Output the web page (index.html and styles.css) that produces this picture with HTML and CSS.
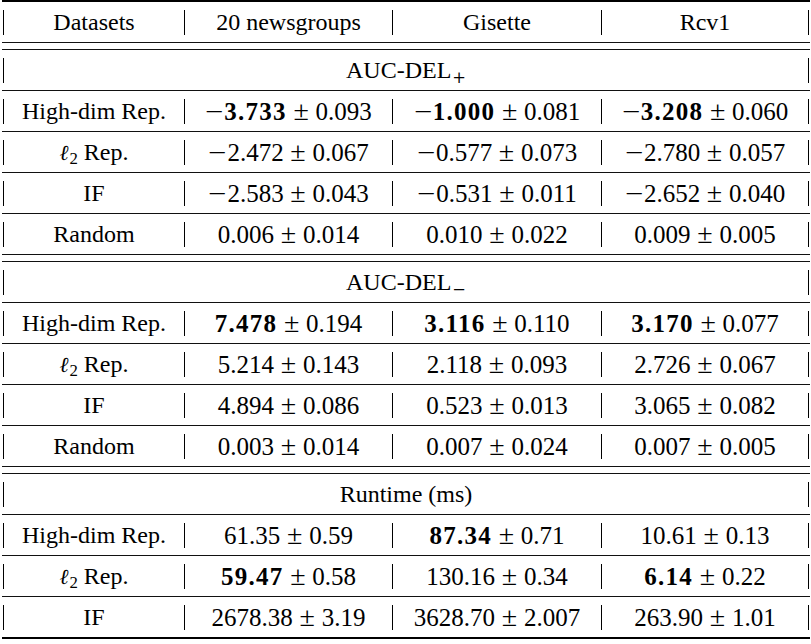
FILE: index.html
```html
<!DOCTYPE html>
<html>
<head>
<meta charset="utf-8">
<title>Results table</title>
<link rel="stylesheet" href="styles.css">
</head>
<body>
<div class="tbl">
  <div class="rule heavy"></div>
  <div class="row">
    <span class="bar"></span><div class="cell">Datasets</div>
    <span class="bar"></span><div class="cell">20 newsgroups</div>
    <span class="bar"></span><div class="cell">Gisette</div>
    <span class="bar"></span><div class="cell">Rcv1</div>
    <span class="bar"></span>
  </div>
  <div class="rule"></div><div class="dgap"></div><div class="rule"></div>

  <div class="row title"><span class="bar"></span><div class="cell">AUC-DEL<sub class="op">+</sub></div><span class="bar"></span></div>
  <div class="rule"></div>
  <div class="row">
    <span class="bar"></span><div class="cell">High-dim Rep.</div>
    <span class="bar"></span><div class="cell m"><span class="neg">−</span><b>3.733</b><span class="pm">±</span>0.093</div>
    <span class="bar"></span><div class="cell m"><span class="neg">−</span><b>1.000</b><span class="pm">±</span>0.081</div>
    <span class="bar"></span><div class="cell m"><span class="neg">−</span><b>3.208</b><span class="pm">±</span>0.060</div>
    <span class="bar"></span>
  </div>
  <div class="rule"></div>
  <div class="row">
    <span class="bar"></span><div class="cell"><span class="ell">ℓ</span><sub class="two">2</sub>&nbsp;Rep.</div>
    <span class="bar"></span><div class="cell m"><span class="neg">−</span>2.472<span class="pm">±</span>0.067</div>
    <span class="bar"></span><div class="cell m"><span class="neg">−</span>0.577<span class="pm">±</span>0.073</div>
    <span class="bar"></span><div class="cell m"><span class="neg">−</span>2.780<span class="pm">±</span>0.057</div>
    <span class="bar"></span>
  </div>
  <div class="rule"></div>
  <div class="row">
    <span class="bar"></span><div class="cell">IF</div>
    <span class="bar"></span><div class="cell m"><span class="neg">−</span>2.583<span class="pm">±</span>0.043</div>
    <span class="bar"></span><div class="cell m"><span class="neg">−</span>0.531<span class="pm">±</span>0.011</div>
    <span class="bar"></span><div class="cell m"><span class="neg">−</span>2.652<span class="pm">±</span>0.040</div>
    <span class="bar"></span>
  </div>
  <div class="rule"></div>
  <div class="row">
    <span class="bar"></span><div class="cell">Random</div>
    <span class="bar"></span><div class="cell m">0.006<span class="pm">±</span>0.014</div>
    <span class="bar"></span><div class="cell m">0.010<span class="pm">±</span>0.022</div>
    <span class="bar"></span><div class="cell m">0.009<span class="pm">±</span>0.005</div>
    <span class="bar"></span>
  </div>
  <div class="rule"></div><div class="dgap"></div><div class="rule"></div>

  <div class="row title"><span class="bar"></span><div class="cell">AUC-DEL<sub class="op">−</sub></div><span class="bar"></span></div>
  <div class="rule"></div>
  <div class="row">
    <span class="bar"></span><div class="cell">High-dim Rep.</div>
    <span class="bar"></span><div class="cell m"><b>7.478</b><span class="pm">±</span>0.194</div>
    <span class="bar"></span><div class="cell m"><b>3.116</b><span class="pm">±</span>0.110</div>
    <span class="bar"></span><div class="cell m"><b>3.170</b><span class="pm">±</span>0.077</div>
    <span class="bar"></span>
  </div>
  <div class="rule"></div>
  <div class="row">
    <span class="bar"></span><div class="cell"><span class="ell">ℓ</span><sub class="two">2</sub>&nbsp;Rep.</div>
    <span class="bar"></span><div class="cell m">5.214<span class="pm">±</span>0.143</div>
    <span class="bar"></span><div class="cell m">2.118<span class="pm">±</span>0.093</div>
    <span class="bar"></span><div class="cell m">2.726<span class="pm">±</span>0.067</div>
    <span class="bar"></span>
  </div>
  <div class="rule"></div>
  <div class="row">
    <span class="bar"></span><div class="cell">IF</div>
    <span class="bar"></span><div class="cell m">4.894<span class="pm">±</span>0.086</div>
    <span class="bar"></span><div class="cell m">0.523<span class="pm">±</span>0.013</div>
    <span class="bar"></span><div class="cell m">3.065<span class="pm">±</span>0.082</div>
    <span class="bar"></span>
  </div>
  <div class="rule"></div>
  <div class="row">
    <span class="bar"></span><div class="cell">Random</div>
    <span class="bar"></span><div class="cell m">0.003<span class="pm">±</span>0.014</div>
    <span class="bar"></span><div class="cell m">0.007<span class="pm">±</span>0.024</div>
    <span class="bar"></span><div class="cell m">0.007<span class="pm">±</span>0.005</div>
    <span class="bar"></span>
  </div>
  <div class="rule"></div><div class="dgap"></div><div class="rule"></div>

  <div class="row title"><span class="bar"></span><div class="cell">Runtime (ms)</div><span class="bar"></span></div>
  <div class="rule"></div>
  <div class="row">
    <span class="bar"></span><div class="cell">High-dim Rep.</div>
    <span class="bar"></span><div class="cell m">61.35<span class="pm">±</span>0.59</div>
    <span class="bar"></span><div class="cell m"><b>87.34</b><span class="pm">±</span>0.71</div>
    <span class="bar"></span><div class="cell m">10.61<span class="pm">±</span>0.13</div>
    <span class="bar"></span>
  </div>
  <div class="rule"></div>
  <div class="row">
    <span class="bar"></span><div class="cell"><span class="ell">ℓ</span><sub class="two">2</sub>&nbsp;Rep.</div>
    <span class="bar"></span><div class="cell m"><b>59.47</b><span class="pm">±</span>0.58</div>
    <span class="bar"></span><div class="cell m">130.16<span class="pm">±</span>0.34</div>
    <span class="bar"></span><div class="cell m"><b>6.14</b><span class="pm">±</span>0.22</div>
    <span class="bar"></span>
  </div>
  <div class="rule"></div>
  <div class="row">
    <span class="bar"></span><div class="cell">IF</div>
    <span class="bar"></span><div class="cell m">2678.38<span class="pm">±</span>3.19</div>
    <span class="bar"></span><div class="cell m">3628.70<span class="pm">±</span>2.007</div>
    <span class="bar"></span><div class="cell m">263.90<span class="pm">±</span>1.01</div>
    <span class="bar"></span>
  </div>
  <div class="rule heavy"></div>
</div>
</body>
</html>
```

FILE: styles.css
```css
html, body {
  margin: 0;
  padding: 0;
  background: #fff;
}

body {
  font-family: "Liberation Serif", "Times New Roman", serif;
  font-size: 24px;
  color: #000;
}

.tbl {
  margin-left: 2px;
  width: 808px;
  display: flex;
  flex-direction: column;
}

.rule {
  height: 1px;
  background: #111;
}

.rule.heavy {
  height: 2px;
  background: #000;
}

.dgap {
  height: 6px;
}

.row {
  height: 40px;
  padding: 0 1px;
  display: grid;
  grid-template-columns: 1px 180px 1px 207px 1px 208px 1px 206px 1px;
  align-items: center;
}

.row.title {
  grid-template-columns: 1px 1fr 1px;
}

.bar {
  width: 1px;
  height: 25px;
  background: #000;
}

.cell {
  display: block;
  text-align: center;
  line-height: 1;
  white-space: nowrap;
}

.cell sub {
  font-size: 0.7em;
  line-height: 0;
  vertical-align: -0.22em;
}

.cell sub.op {
  font-family: "DejaVu Serif", serif;
  font-weight: 300;
  font-size: 0.68em;
  vertical-align: -0.32em;
  margin-left: 1px;
}

.cell sub.two {
  vertical-align: -0.26em;
  margin-left: 1px;
}

.ell {
  font-family: "DejaVu Serif", serif;
  font-style: italic;
  font-size: 0.9em;
}

.m {
  font-size: 25px;
}

.m b {
  font-weight: 700;
  letter-spacing: 0.05em;
}

.neg {
  display: inline-block;
  transform: scaleX(1.3);
  margin: 0 0.12em 0 0.08em;
}

.pm {
  font-size: 1.12em;
  line-height: 0;
  margin: 0 0.24em;
}
```
